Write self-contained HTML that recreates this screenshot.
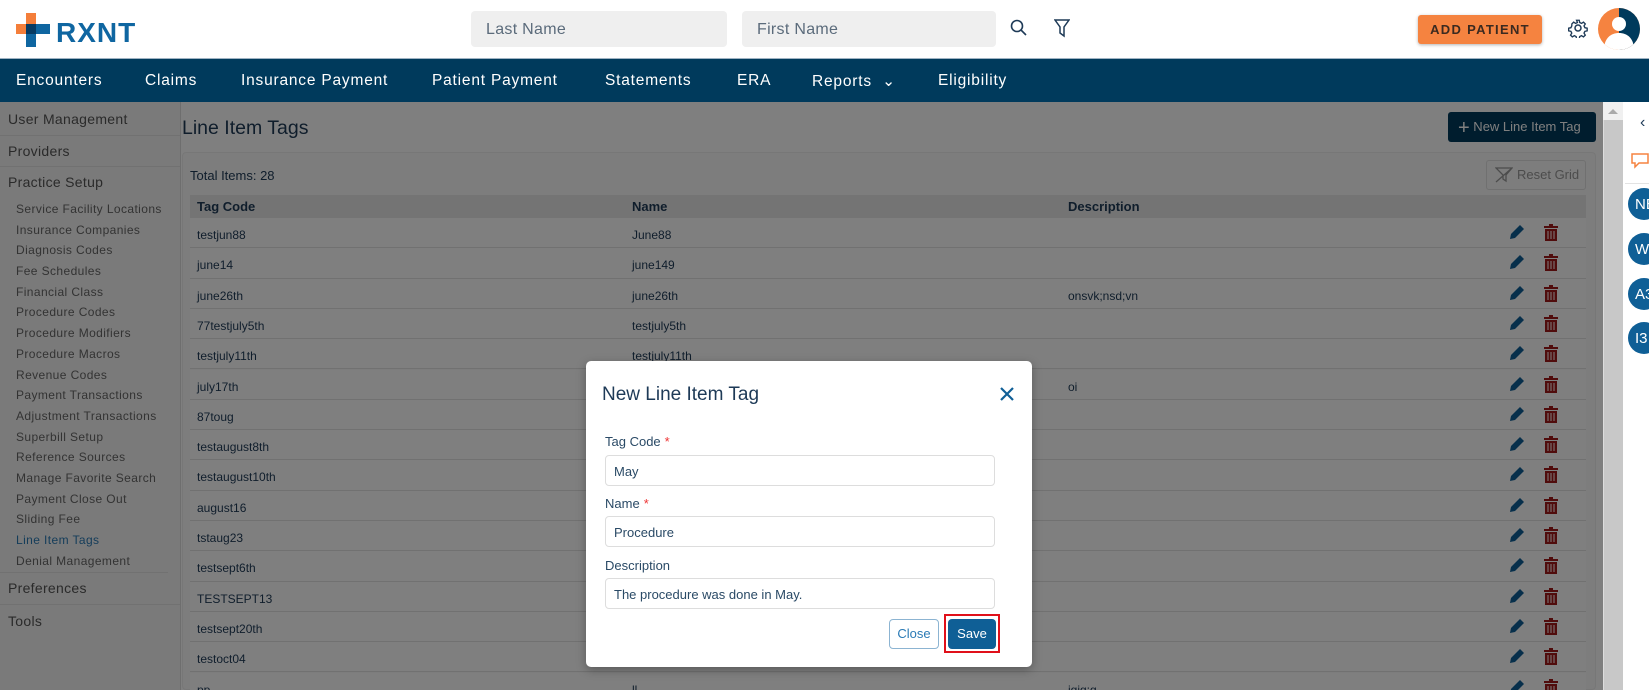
<!DOCTYPE html>
<html style="overflow:hidden;width:1649px;height:690px"><head><meta charset="utf-8"><style>
*{box-sizing:border-box;margin:0;padding:0}
body{width:1649px;height:690px;overflow:hidden;font-family:"Liberation Sans",sans-serif;background:#fff;position:relative;color:#1e3a57}
.a{position:absolute}
.hdr{left:0;top:0;width:1649px;height:59px;background:#fff;border-bottom:1px solid #9fb3c3}
.inp{background:#efefef;border-radius:4px;height:36px;top:11px;font-size:16px;color:#5b6b7b;padding:10px 15px;letter-spacing:.3px}
.nav{left:0;top:59px;width:1649px;height:43px;background:#003a5c}
.nav span{position:absolute;top:13px;color:#fff;font-size:15.5px;letter-spacing:.8px}
.side{left:0;top:102px;width:181px;height:588px;background:#f5f5f5;border-right:1px solid #ddd}
.side .m{position:absolute;left:8px;font-size:14px;color:#555;letter-spacing:.3px}
.side .s{position:absolute;left:16px;font-size:12px;color:#666;letter-spacing:.4px}
.row{position:absolute;left:0;width:1396px;height:30.3px;border-bottom:1px solid #e3e3e3;background:#fff;font-size:12px}
.row span{position:absolute;top:10px}
.ov{left:0;top:102px;width:1603px;height:588px;background:rgba(0,0,0,.5)}
.lbl{position:absolute;left:605px;font-size:13px;color:#2a4a66}
.lbl i{color:#e33;font-style:normal;margin-left:4px}
.fi{position:absolute;left:605px;width:390px;height:31px;border:1px solid #ddd;border-radius:4px;font-size:13px;padding:8px 8px;color:#2a4a66}
.circ{position:absolute;left:1628px;width:32px;height:32px;border-radius:50%;background:#0f5f96;color:#fff;font-size:15px;padding:8px 0 0 7px}
</style></head><body>
<div class="a hdr"></div>
<svg class="a" style="left:16px;top:13px" width="36" height="34" viewBox="0 0 36 34"><path d="M10 0h10v11h-10z" fill="#f47e3a"/><path d="M0 11h20v10H0z" fill="#f47e3a"/><path d="M10 11h10v23H10z" fill="#0f66a1"/><path d="M10 11h24v10H10z" fill="#0f66a1"/><path d="M10 11h10v10H10z" fill="#073b63"/></svg>
<div class="a" style="left:56px;top:17px;font-size:28px;font-weight:bold;color:#0f66a1;letter-spacing:1px">RXNT</div>
<div class="a inp" style="left:471px;width:256px">Last Name</div>
<div class="a inp" style="left:742px;width:254px">First Name</div>
<svg class="a" style="left:1010px;top:19px" width="18" height="18" viewBox="0 0 18 18" fill="none" stroke="#1e3a57" stroke-width="1.6"><circle cx="7" cy="7" r="5.5"/><path d="M11 11l5 5"/></svg>
<svg class="a" style="left:1054px;top:18px" width="16" height="20" viewBox="0 0 16 20" fill="none" stroke="#1e3a57" stroke-width="1.5"><path d="M1 2h14l-5 7v9l-4-3V9z"/></svg>
<div class="a" style="left:1418px;top:15px;width:124px;height:29px;background:#f58340;border-radius:3px;box-shadow:0 1px 3px rgba(0,0,0,.3);color:#3b2a20;font-size:13px;font-weight:bold;letter-spacing:1.3px;text-align:center;line-height:29px">ADD PATIENT</div>
<svg class="a" style="left:1568px;top:18px" width="20" height="20" viewBox="0 0 20 20" fill="none" stroke="#1e3a57" stroke-width="1.5"><circle cx="10" cy="10" r="3"/><path d="M8.5 1.5h3l.5 2.5 2 1 2.2-1.4 2 2-1.4 2.2 1 2 2.5.5v3l-2.5.5-1 2 1.4 2.2-2 2-2.2-1.4-2 1-.5 2.5h-3l-.5-2.5-2-1-2.2 1.4-2-2 1.4-2.2-1-2-2.5-.5v-3l2.5-.5 1-2L3.3 5.6l2-2 2.2 1.4 2-1z" transform="scale(.9) translate(1 1)"/></svg>
<svg class="a" style="left:1598px;top:8px" width="42" height="42" viewBox="0 0 42 42"><clipPath id="c"><circle cx="21" cy="21" r="21"/></clipPath><g clip-path="url(#c)"><rect width="42" height="42" fill="#f58340"/><rect x="21" width="21" height="42" fill="#003a5c"/><circle cx="21" cy="16" r="7" fill="#fff"/><path d="M6 42c0-12 7-17 15-17s15 5 15 17z" fill="#fff"/></g></svg>
<div class="a nav"><span style="left:16px">Encounters</span><span style="left:145px">Claims</span><span style="left:241px">Insurance Payment</span><span style="left:432px">Patient Payment</span><span style="left:605px">Statements</span><span style="left:737px">ERA</span><span style="left:812px">Reports &nbsp;⌄</span><span style="left:938px">Eligibility</span></div>
<div class="a side">
<div class="m" style="top:9px">User Management</div><div class="a" style="left:0;top:33px;width:180px;border-top:1px solid #e3e3e3"></div>
<div class="m" style="top:41px">Providers</div><div class="a" style="left:0;top:64px;width:180px;border-top:1px solid #e3e3e3"></div>
<div class="m" style="top:72px">Practice Setup</div>
<div class="s" style="top:100px">Service Facility Locations</div>
<div class="s" style="top:121px">Insurance Companies</div>
<div class="s" style="top:141px">Diagnosis Codes</div>
<div class="s" style="top:162px">Fee Schedules</div>
<div class="s" style="top:183px">Financial Class</div>
<div class="s" style="top:203px">Procedure Codes</div>
<div class="s" style="top:224px">Procedure Modifiers</div>
<div class="s" style="top:245px">Procedure Macros</div>
<div class="s" style="top:266px">Revenue Codes</div>
<div class="s" style="top:286px">Payment Transactions</div>
<div class="s" style="top:307px">Adjustment Transactions</div>
<div class="s" style="top:328px">Superbill Setup</div>
<div class="s" style="top:348px">Reference Sources</div>
<div class="s" style="top:369px">Manage Favorite Search</div>
<div class="s" style="top:390px">Payment Close Out</div>
<div class="s" style="top:410px">Sliding Fee</div>
<div class="s" style="top:431px;color:#2a7ab5">Line Item Tags</div>
<div class="s" style="top:452px">Denial Management</div>
<div class="a" style="left:0;top:470px;width:168px;border-top:1px solid #e3e3e3"></div>
<div class="m" style="top:478px">Preferences</div><div class="a" style="left:0;top:502px;width:180px;border-top:1px solid #e3e3e3"></div>
<div class="m" style="top:511px">Tools</div>
</div>
<div class="a" style="left:182px;top:117px;font-size:19.5px;color:#1e3a57">Line Item Tags</div>
<div class="a" style="left:1448px;top:112px;width:148px;height:30px;background:#003a5c;border-radius:3px;color:#fff;font-size:13px;line-height:30px;padding-left:10px"><span style="font-size:20px;vertical-align:-3px">+</span> New Line Item Tag</div>
<div class="a" style="left:182px;top:152px;width:1414px;height:538px;background:#fafafa;border:1px solid #eee;border-radius:4px"></div>
<div class="a" style="left:190px;top:168px;font-size:13px">Total Items: 28</div>
<div class="a" style="left:1486px;top:160px;width:100px;height:30px;border:1px solid #e0e0e0;border-radius:3px;color:#999;font-size:13px;line-height:28px;padding-left:30px">Reset Grid</div>
<svg class="a" style="left:1495px;top:167px" width="18" height="16" viewBox="0 0 18 16" fill="none" stroke="#999" stroke-width="1.3"><path d="M1 1h16l-6 7v6l-3-2V8zM1 15L17 1"/></svg>
<div class="a" style="left:190px;top:195px;width:1396px;height:23px;background:#e9e9e9;font-size:13px;font-weight:bold"><span class="a" style="left:7px;top:4px">Tag Code</span><span class="a" style="left:442px;top:4px">Name</span><span class="a" style="left:878px;top:4px">Description</span></div>
<div class="a" id="rows" style="left:190px;top:218px;width:1396px;height:472px;overflow:hidden"></div>
<div class="a ov"></div>
<div class="a" style="left:1603px;top:102px;width:20px;height:588px;background:#c8c8c8;border-left:1px solid #ddd"></div>
<div class="a" style="left:1603px;top:102px;width:20px;height:18px;background:#f0f0f0"></div>
<div class="a" style="left:1608px;top:109px;border:5px solid transparent;border-bottom-color:#aaa;border-top:0"></div>
<div class="a" style="left:1623px;top:102px;width:26px;height:588px;background:#fff"></div>
<div class="a" style="left:1640px;top:114px;font-size:16px;color:#1e3a57">‹</div>
<svg class="a" style="left:1631px;top:153px" width="20" height="18" viewBox="0 0 20 18" fill="none" stroke="#f58340" stroke-width="1.5"><path d="M1 1h16v9H8l-4 4v-4H1z"/></svg>
<div class="a" style="left:1625px;top:183px;width:24px;border-top:1px solid #e3e3e3"></div>
<div class="circ" style="top:188px">NE</div><div class="circ" style="top:233px">W</div><div class="circ" style="top:278px">A3</div><div class="circ" style="top:322px">I3</div>
<div class="a" style="left:586px;top:361px;width:446px;height:306px;background:#fff;border-radius:5px;box-shadow:0 3px 10px rgba(0,0,0,.3)"></div>
<div class="a" style="left:602px;top:384px;font-size:19px;color:#1e3a57">New Line Item Tag</div>
<svg class="a" style="left:1000px;top:387px" width="14" height="14" viewBox="0 0 14 14" stroke="#0f5f96" stroke-width="2.2"><path d="M1 1l12 12M13 1L1 13"/></svg>
<div class="lbl" style="top:434px">Tag Code<i>*</i></div>
<div class="fi" style="top:455px">May</div>
<div class="lbl" style="top:496px">Name<i>*</i></div>
<div class="fi" style="top:516px">Procedure</div>
<div class="lbl" style="top:558px">Description</div>
<div class="fi" style="top:578px">The procedure was done in May.</div>
<div class="a" style="left:889px;top:619px;width:50px;height:30px;border:1px solid #8cb4d2;border-radius:4px;color:#2a7ab5;font-size:13px;line-height:28px;text-align:center">Close</div>
<div class="a" style="left:944px;top:614px;width:56px;height:39px;border:2px solid #e0101a"></div>
<div class="a" style="left:948px;top:619px;width:48px;height:30px;background:#0f5f96;border-radius:4px;color:#fff;font-size:13px;line-height:30px;text-align:center">Save</div>
<script>
var d=[["testjun88","June88",""],["june14","june149",""],["june26th","june26th","onsvk;nsd;vn"],["77testjuly5th","testjuly5th",""],["testjuly11th","testjuly11th",""],["july17th","","oi"],["87toug","",""],["testaugust8th","",""],["testaugust10th","",""],["august16","",""],["tstaug23","",""],["testsept6th","",""],["TESTSEPT13","",""],["testsept20th","",""],["testoct04","",""],["pp","ll","jgjg;g"]];
var h="",pen='<svg class="a" style="left:1319px;top:6px" width="16" height="16" viewBox="0 0 16 16"><path d="M11 1l4 4-9 9-5 1 1-5z" fill="#0f5f96"/></svg>',tr='<svg class="a" style="left:1354px;top:6px" width="14" height="17" viewBox="0 0 14 17"><path d="M0 2h14v2H0zM5 0h4v2H5zM1 5h12v12H1z" fill="#a01818"/><path d="M4 7v8M7 7v8M10 7v8" stroke="#fff" stroke-width="1"/></svg>';
d.forEach(function(r,i){h+='<div class="row" style="top:'+(i*30.3)+'px"><span style="left:7px">'+r[0]+'</span><span style="left:442px">'+r[1]+'</span><span style="left:878px">'+r[2]+'</span>'+pen+tr+'</div>'});
document.getElementById("rows").innerHTML=h;
</script>
</body></html>
